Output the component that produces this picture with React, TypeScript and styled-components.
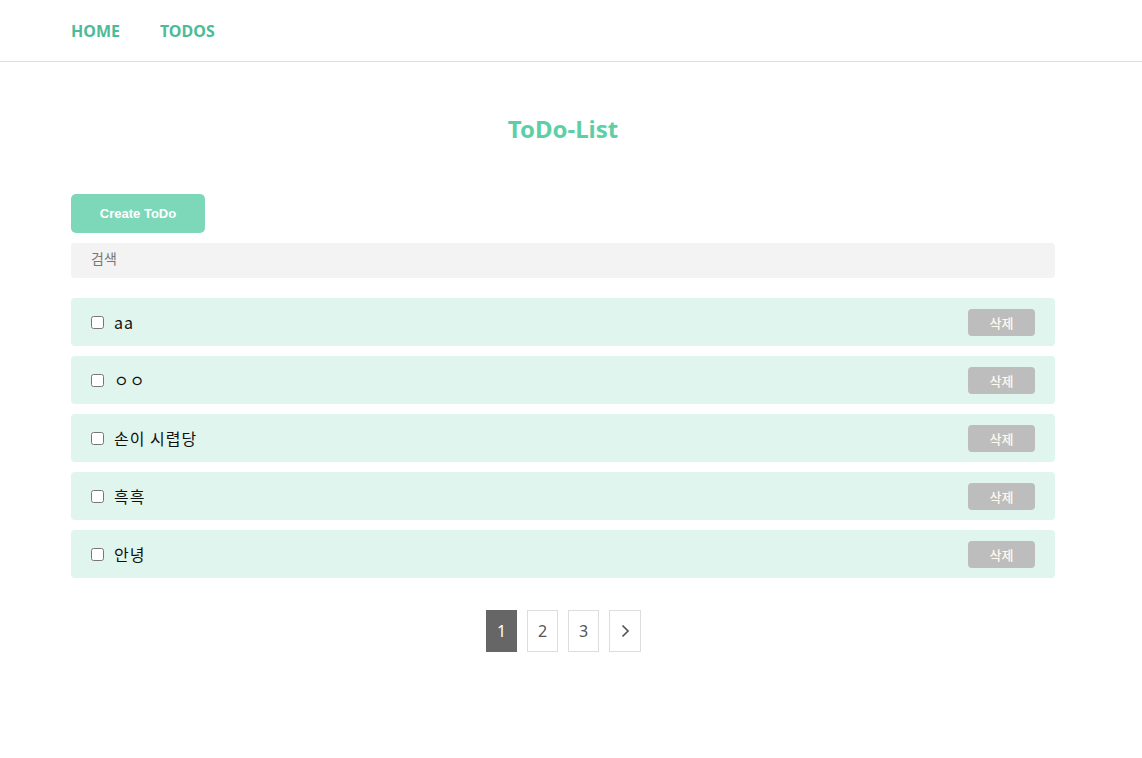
import styled, { createGlobalStyle } from "styled-components";
import { useState } from "react";

const GlobalStyle = createGlobalStyle`
  body {
    margin: 0;
    background: #fff;
    font-family: "Noto Sans", "Noto Sans CJK KR", sans-serif;
  }
`;

const initialTodos = [
  { id: 1, text: "aa", done: false },
  { id: 2, text: "ㅇㅇ", done: false },
  { id: 3, text: "손이 시렵당", done: false },
  { id: 4, text: "흑흑", done: false },
  { id: 5, text: "안녕", done: false },
];

export default function App() {
  const [todos, setTodos] = useState(initialTodos);
  const [page, setPage] = useState(1);

  const onToggle = (id: number) => {
    setTodos(todos.map((t) => (t.id === id ? { ...t, done: !t.done } : t)));
  };

  const onDelete = (id: number) => {
    setTodos(todos.filter((t) => t.id !== id));
  };

  return (
    <>
      <GlobalStyle />
      <Header>
        <NavLink href="#">HOME</NavLink>
        <NavLink href="#">TODOS</NavLink>
      </Header>
      <Main>
        <Title>ToDo-List</Title>
        <CreateButton>Create ToDo</CreateButton>
        <SearchInput placeholder="검색" />
        <TodoList>
          {todos.map(({ id, text, done }) => (
            <TodoItem key={id}>
              <label>
                <input
                  type="checkbox"
                  checked={done}
                  onChange={() => onToggle(id)}
                />
                <span>{text}</span>
              </label>
              <DeleteButton onClick={() => onDelete(id)}>삭제</DeleteButton>
            </TodoItem>
          ))}
        </TodoList>
        <Pagination>
          {[1, 2, 3].map((n) => (
            <PageButton
              key={n}
              $active={page === n}
              onClick={() => setPage(n)}
            >
              {n}
            </PageButton>
          ))}
          <PageButton $wide onClick={() => setPage(Math.min(page + 1, 3))}>
            <svg width="14" height="14" viewBox="0 0 14 14" fill="none">
              <path
                d="M4.5 1.5 L10 7 L4.5 12.5"
                stroke="#555"
                strokeWidth="1.7"
              />
            </svg>
          </PageButton>
        </Pagination>
      </Main>
    </>
  );
}

const Header = styled.header`
  display: flex;
  align-items: center;
  gap: 40px;
  height: 62px;
  padding: 0 71px;
  border-bottom: 1px solid #dddddd;
  box-sizing: border-box;
`;

const NavLink = styled.a`
  font-size: 16px;
  font-weight: 700;
  color: #4dbb98;
  text-decoration: none;
`;

const Main = styled.main`
  display: flex;
  flex-direction: column;
  width: 984px;
  margin-left: 71px;
`;

const Title = styled.h1`
  margin: 50px 0 0;
  height: 36px;
  line-height: 34px;
  text-align: center;
  font-size: 24px;
  font-weight: 700;
  color: #5ccfa5;
`;

const CreateButton = styled.button`
  width: 134px;
  height: 39px;
  margin-top: 46px;
  border: none;
  border-radius: 5px;
  background-color: #7dd8b9;
  color: #fff;
  font-family: "Liberation Sans", Arial, sans-serif;
  font-size: 13px;
  font-weight: 700;
  cursor: pointer;
`;

const SearchInput = styled.input`
  height: 35px;
  margin-top: 10px;
  padding: 0 20px 5px;
  border: none;
  border-radius: 4px;
  background-color: #f3f3f3;
  font-family: "Noto Sans CJK KR", sans-serif;
  font-size: 14px;
  box-sizing: border-box;
  outline: none;

  &::placeholder {
    color: #777;
  }
`;

const TodoList = styled.ul`
  display: flex;
  flex-direction: column;
  gap: 10px;
  margin: 20px 0 0;
  padding: 0;
  list-style: none;
`;

const TodoItem = styled.li`
  display: flex;
  align-items: center;
  justify-content: space-between;
  height: 48px;
  padding: 0 20px;
  border-radius: 4px;
  background-color: #dff5ed;
  box-sizing: border-box;

  label {
    display: flex;
    align-items: center;
    gap: 10px;
    font-family: "Noto Sans CJK KR", sans-serif;
    font-size: 16px;
    font-weight: 400;
    letter-spacing: 1px;
    color: #111;
  }

  input {
    width: 13px;
    height: 13px;
    margin: 1px 0 0;
  }
`;

const DeleteButton = styled.button`
  width: 67px;
  height: 27px;
  border: none;
  border-radius: 4px;
  background-color: #bdbdbd;
  color: #fffaf0;
  font-family: "Noto Sans CJK KR", sans-serif;
  font-size: 13px;
  font-weight: 500;
  cursor: pointer;
`;

const Pagination = styled.nav`
  display: flex;
  justify-content: center;
  gap: 10px;
  margin-top: 32px;
  padding-left: 1px;
`;

const PageButton = styled.button<{ $active?: boolean; $wide?: boolean }>`
  display: flex;
  align-items: center;
  justify-content: center;
  width: ${(p) => (p.$wide ? "32px" : "31px")};
  height: 42px;
  padding: 0;
  border: 1px solid ${(p) => (p.$active ? "#666" : "#dddddd")};
  background-color: ${(p) => (p.$active ? "#666" : "#fff")};
  color: ${(p) => (p.$active ? "#fff" : "#555")};
  font-family: "Noto Sans", sans-serif;
  font-size: 16px;
  cursor: pointer;
`;
